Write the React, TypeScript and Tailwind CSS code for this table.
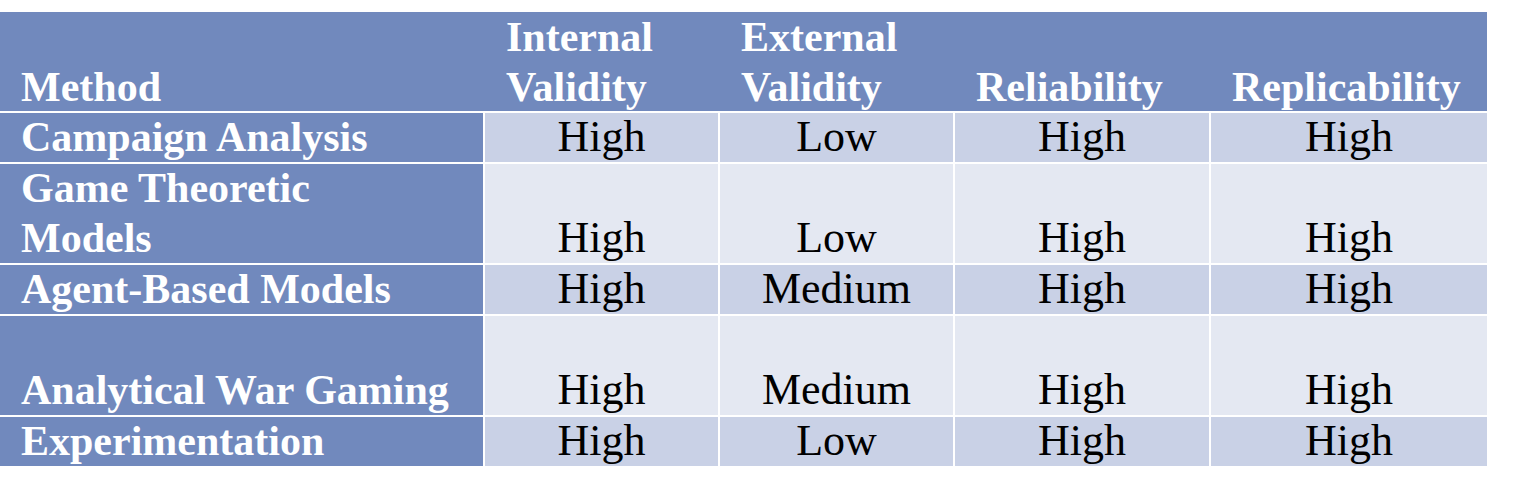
const header = ["Method", "Internal\nValidity", "External\nValidity", "Reliability", "Replicability"];

const rows = [
  { method: "Campaign Analysis", values: ["High", "Low", "High", "High"], tall: false, dark: true },
  { method: "Game Theoretic\nModels", values: ["High", "Low", "High", "High"], tall: true, dark: false },
  { method: "Agent-Based Models", values: ["High", "Medium", "High", "High"], tall: false, dark: true },
  { method: "\u00a0\nAnalytical War Gaming", values: ["High", "Medium", "High", "High"], tall: true, dark: false },
  { method: "Experimentation", values: ["High", "Low", "High", "High"], tall: false, dark: true },
];

function Lines({ text }: { text: string }) {
  return (
    <>
      {text.split("\n").map((line, i) => (
        <div key={i} className="whitespace-nowrap">{line}</div>
      ))}
    </>
  );
}

export default function App() {
  return (
    <div className="w-[1533px] h-[480px] bg-white pt-[12px] [font-family:'Liberation_Serif','Times_New_Roman',serif]">
      <div className="w-[1487px] bg-white">
        {/* Header row: one continuous blue band */}
        <div className="grid grid-cols-[485px_235px_235px_256px_276px] h-[99px] bg-[#7189bd] text-white font-bold text-[42px] leading-[50px]">
          {header.map((h) => (
            <div key={h} className="flex flex-col justify-end pl-[21px]">
              <Lines text={h} />
            </div>
          ))}
        </div>

        {/* Body */}
        <div className="grid grid-cols-[483px_233px_233px_254px_276px] gap-[2px] mt-[2px]">
          {rows.map((r) => (
            <div key={r.method} className="contents">
              <div
                className={`flex flex-col justify-end pl-[21px] bg-[#7189bd] text-white font-bold text-[42px] leading-[50px] ${
                  r.tall ? "h-[99px]" : "h-[49px]"
                }`}
              >
                <Lines text={r.method} />
              </div>
              {r.values.map((v, i) => (
                <div
                  key={i}
                  className={`flex flex-col justify-end items-center text-black text-[44px] leading-[50px] ${
                    r.dark ? "bg-[#c9d1e6]" : "bg-[#e4e8f2]"
                  } ${r.tall ? "h-[99px]" : "h-[49px]"}`}
                >
                  <div className="whitespace-nowrap">{v}</div>
                </div>
              ))}
            </div>
          ))}
        </div>
      </div>
    </div>
  );
}
